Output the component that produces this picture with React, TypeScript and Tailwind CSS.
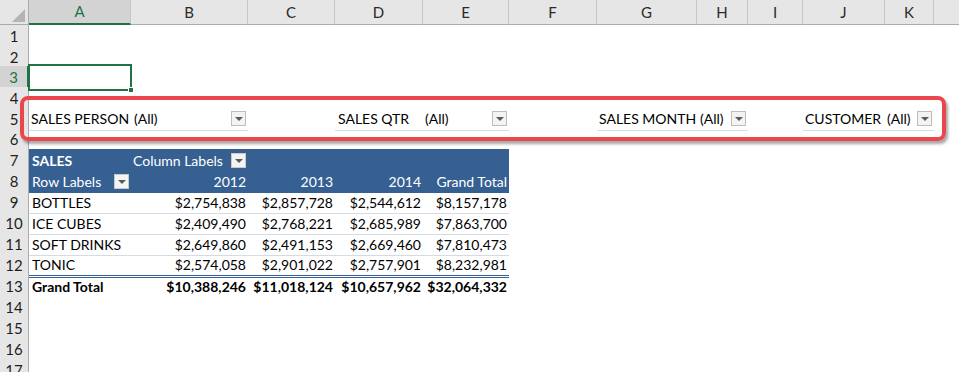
import React from 'react';

const GRID =
  'grid grid-cols-[29px_102px_117px_87px_88px_86px_88px_100px_51px_55px_82px_49px_1fr]';

const LETTERS = ['A', 'B', 'C', 'D', 'E', 'F', 'G', 'H', 'I', 'J', 'K'];

const DATA = [
  ['BOTTLES', '$2,754,838', '$2,857,728', '$2,544,612', '$8,157,178'],
  ['ICE CUBES', '$2,409,490', '$2,768,221', '$2,685,989', '$7,863,700'],
  ['SOFT DRINKS', '$2,649,860', '$2,491,153', '$2,669,460', '$7,810,473'],
  ['TONIC', '$2,574,058', '$2,901,022', '$2,757,901', '$8,232,981'],
];

const DropBtn: React.FC<{ onBlue?: boolean }> = ({ onBlue }) => (
  <span
    className={`ml-auto mr-[2px] flex h-[15px] w-[15px] shrink-0 items-center justify-center border ${
      onBlue ? 'border-[#c9c9c9] bg-[#f4f4f4]' : 'border-[#bdbdbd] bg-[#f3f3f3]'
    }`}
  >
    <span className="mt-[1px] h-0 w-0 border-x-[4px] border-t-[4px] border-x-transparent border-t-[#5a5a5a]" />
  </span>
);

const Row: React.FC<{ n: number; h: string; active?: boolean; children?: React.ReactNode }> = ({
  n,
  h,
  active,
  children,
}) => (
  <div className={`${GRID} ${h}`}>
    <div
      className={`flex items-center justify-center border-b border-[#c8c8c8] text-[15px] ${
        active
          ? 'border-r-2 border-r-[#217346] bg-[#d3d3d3] text-[#217346]'
          : 'border-r border-r-[#ababab] bg-[#e6e6e6] text-[#1e1e1e]'
      }`}
    >
      {n}
    </div>
    {children}
  </div>
);

export default function App() {
  return (
    <div className="relative h-[372px] w-[959px] overflow-hidden bg-white font-['Lato',sans-serif] text-[14px] text-black">
      {/* column letters */}
      <div className={`${GRID} h-[25px] bg-[#e6e6e6] text-[15px] text-[#2a2a2a]`}>
        <div className="relative border-r border-b border-[#ababab]">
          <svg className="absolute left-0 top-0" width="29" height="25">
            <polygon points="25,9 25,22 12,22" fill="#b4b4b4" />
          </svg>
        </div>
        {LETTERS.map((l) => (
          <div
            key={l}
            className={`flex items-center justify-center border-r border-[#c6c6c6] ${
              l === 'A'
                ? 'border-b-2 border-b-[#217346] bg-[#d3d3d3] text-[#217346]'
                : 'border-b border-b-[#ababab]'
            }`}
          >
            {l}
          </div>
        ))}
        <div className="border-b border-[#ababab]" />
      </div>

      <Row n={1} h="h-[20.67px]" />
      <Row n={2} h="h-[20.67px]" />
      <Row n={3} h="h-[20.67px]" active>
        <div className="relative">
          <div className="absolute -left-[1px] -top-[2px] -bottom-[1px] -right-[1px] border-2 border-[#217346]" />
          <div className="absolute -bottom-[3px] -right-[3px] h-[6px] w-[6px] border border-white bg-[#217346]" />
        </div>
      </Row>
      <Row n={4} h="h-[20.67px]" />
      <Row n={5} h="h-[20.67px]">
        <div className="flex items-center border-b border-[#d5dde8] pl-[2px]">SALES PERSON</div>
        <div className="flex items-center border-b border-[#d5dde8] pl-[3px]">
          (All)
          <DropBtn />
        </div>
        <div />
        <div className="flex items-center border-b border-[#d5dde8] pl-[3px]">SALES QTR</div>
        <div className="flex items-center border-b border-[#d5dde8] pl-[2px]">
          (All)
          <DropBtn />
        </div>
        <div />
        <div className="flex items-center border-b border-[#d5dde8] pl-[2px]">SALES MONTH</div>
        <div className="flex items-center border-b border-[#d5dde8] pl-[3px]">
          (All)
          <DropBtn />
        </div>
        <div />
        <div className="flex items-center border-b border-[#d5dde8] pl-[2px]">CUSTOMER</div>
        <div className="flex items-center border-b border-[#d5dde8] pl-[2px]">
          (All)
          <DropBtn />
        </div>
      </Row>
      <Row n={6} h="h-[20.67px]" />

      {/* pivot header */}
      <Row n={7} h="h-[21px]">
        <div className="flex items-center bg-[#366092] pl-[3px] font-bold text-white">SALES</div>
        <div className="flex items-center bg-[#366092] pl-[2px] text-white">
          Column Labels
          <DropBtn onBlue />
        </div>
        <div className="bg-[#366092]" />
        <div className="bg-[#366092]" />
        <div className="bg-[#366092]" />
      </Row>
      <Row n={8} h="h-[21px]">
        <div className="flex items-center bg-[#366092] pl-[3px] text-white">
          Row Labels
          <DropBtn onBlue />
        </div>
        <div className="flex items-center justify-end bg-[#366092] pr-[2px] text-white">2012</div>
        <div className="flex items-center justify-end bg-[#366092] pr-[2px] text-white">2013</div>
        <div className="flex items-center justify-end bg-[#366092] pr-[2px] text-white">2014</div>
        <div className="flex items-center justify-end bg-[#366092] pr-[2px] text-white">Grand Total</div>
      </Row>

      {DATA.map((r, i) => (
        <Row key={r[0]} n={9 + i} h="h-[21px]">
          {r.map((v, j) => (
            <div
              key={j}
              className={`flex items-center ${
                i === DATA.length - 1
                  ? 'border-b-[3px] border-double border-[#366092]'
                  : 'border-b border-[#d3dbe6]'
              } ${j === 0 ? 'pl-[3px]' : 'justify-end pr-[2px]'}`}
            >
              {v}
            </div>
          ))}
        </Row>
      ))}

      <Row n={13} h="h-[21px]">
        <div className="flex items-center pl-[3px] font-bold">Grand Total</div>
        <div className="flex items-center justify-end pr-[2px] font-bold">$10,388,246</div>
        <div className="flex items-center justify-end pr-[2px] font-bold">$11,018,124</div>
        <div className="flex items-center justify-end pr-[2px] font-bold">$10,657,962</div>
        <div className="flex items-center justify-end pr-[2px] font-bold">$32,064,332</div>
      </Row>
      <Row n={14} h="h-[21px]" />
      <Row n={15} h="h-[21px]" />
      <Row n={16} h="h-[21px]" />
      <Row n={17} h="h-[21px]" />

      {/* red annotation around the report filters */}
      <div className="pointer-events-none absolute left-[20px] top-[96px] h-[45px] w-[926px] rounded-[8px] border-[4px] border-[#e9474b] shadow-[2px_3px_3px_rgba(0,0,0,0.35)]" />
    </div>
  );
}
